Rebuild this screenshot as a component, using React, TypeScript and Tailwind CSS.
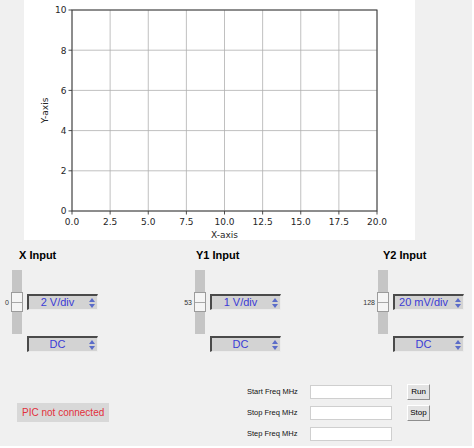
import React from 'react';

const AX = { x0: 48, x1: 353, y0: 10, y1: 211 };

function Plot() {
  const xs = Array.from({ length: 9 }, (_, i) => i);
  const ys = Array.from({ length: 6 }, (_, i) => i);
  const xAt = (i: number) => AX.x0 + (i * (AX.x1 - AX.x0)) / 8;
  const yAt = (i: number) => AX.y1 - (i * (AX.y1 - AX.y0)) / 5;
  const font = { fontFamily: '"DejaVu Sans", sans-serif', fontSize: 9 };

  return (
    <svg width={391} height={240} className="bg-white block">
      {/* grid */}
      {xs.map((i) => (
        <line key={'gx' + i} x1={xAt(i)} x2={xAt(i)} y1={AX.y0} y2={AX.y1} stroke="#b0b0b0" strokeWidth={0.8} />
      ))}
      {ys.map((i) => (
        <line key={'gy' + i} x1={AX.x0} x2={AX.x1} y1={yAt(i)} y2={yAt(i)} stroke="#b0b0b0" strokeWidth={0.8} />
      ))}
      {/* spines */}
      <rect x={AX.x0} y={AX.y0} width={AX.x1 - AX.x0} height={AX.y1 - AX.y0} fill="none" stroke="#3a3a3a" strokeWidth={1} />
      {/* ticks + labels */}
      {xs.map((i) => (
        <g key={'tx' + i}>
          <line x1={xAt(i)} x2={xAt(i)} y1={AX.y1} y2={AX.y1 + 3.5} stroke="#3a3a3a" strokeWidth={0.9} />
          <text x={xAt(i)} y={224.5} textAnchor="middle" fill="#262626" style={font}>
            {(i * 2.5).toFixed(1)}
          </text>
        </g>
      ))}
      {ys.map((i) => (
        <g key={'ty' + i}>
          <line x1={AX.x0 - 3.5} x2={AX.x0} y1={yAt(i)} y2={yAt(i)} stroke="#3a3a3a" strokeWidth={0.9} />
          <text x={42.5} y={yAt(i) + 3.3} textAnchor="end" fill="#262626" style={font}>
            {i * 2}
          </text>
        </g>
      ))}
      <text x={(AX.x0 + AX.x1) / 2} y={237.5} textAnchor="middle" fill="#262626" style={font}>
        X-axis
      </text>
      <text
        x={0}
        y={0}
        textAnchor="middle"
        fill="#262626"
        style={font}
        transform={`translate(24 ${(AX.y0 + AX.y1) / 2}) rotate(-90)`}
      >
        Y-axis
      </text>
    </svg>
  );
}

function SpinArrows() {
  return (
    <svg width={6} height={10} viewBox="0 0 6 10">
      <polygon points="3,0 6,4 0,4" fill="#5b6cc8" />
      <polygon points="0,6 6,6 3,10" fill="#5b6cc8" />
    </svg>
  );
}

function Spinbox({ value }: { value: string }) {
  return (
    <div className="flex items-center w-[71px] h-[16px] bg-[#d3d3d3] border-t-2 border-l-2 border-[#4a4a4a] border-b border-r border-b-[#ececec] border-r-[#ececec]">
      <span className="flex-1 text-center text-[11px] leading-none text-[#3b3bd6]">
        {value}
      </span>
      <span className="w-[11px] flex justify-center">
        <SpinArrows />
      </span>
    </div>
  );
}

function Channel({ title, titleClass, level, scale }: { title: string; titleClass: string; level: string; scale: string }) {
  return (
    <div className="flex flex-col w-[98px] shrink-0">
      <div className={`pt-[9px] h-[22px] text-[11px] leading-[13px] font-bold text-black whitespace-nowrap ${titleClass}`}>
        {title}
      </div>
      <div className="flex mt-[8px]">
        <div className="w-[10px] h-[64px] flex items-center justify-end pr-[1px] text-[7px] leading-none text-[#333] whitespace-nowrap">
          {level}
        </div>
        <div className="ml-[2px] w-[10px] h-[64px] bg-[#c5c5c5] relative">
          <div className="absolute left-[-1px] top-[22px] w-[12px] h-[20px] bg-[#f5f5f5] border border-[#9c9c9c] flex flex-col">
            <div className="flex-1 border-b border-[#a8a8a8]" />
            <div className="flex-1" />
          </div>
        </div>
        <div className="ml-[5px] pt-[24px] flex flex-col">
          <Spinbox value={scale} />
          <div className="mt-[26px]">
            <Spinbox value="DC" />
          </div>
        </div>
      </div>
    </div>
  );
}

function Entry() {
  return <div className="w-[82px] h-[14px] bg-white border border-[#cfcfcf]" />;
}

function Btn({ label }: { label: string }) {
  return (
    <button className="w-[23px] h-[16px] bg-[#e3e3e3] border border-t-white border-l-white border-r-[#8e8e8e] border-b-[#8e8e8e] text-[8px] leading-none text-black self-center">
      {label}
    </button>
  );
}

export default function App() {
  return (
    <div className="w-[474px] h-[448px] bg-white">
      <div className="w-[472px] h-[446px] bg-[#f0f0f0] flex flex-col font-['Liberation_Sans',Arial,sans-serif]">
        <div className="h-[240px] pl-[24px] flex">
          <Plot />
        </div>

        <div className="h-[130px] flex gap-[85px]">
          <Channel title="X Input" titleClass="ml-[19px]" level="0" scale="2 V/div" />
          <Channel title="Y1 Input" titleClass="ml-[13px]" level="53" scale="1 V/div" />
          <Channel title="Y2 Input" titleClass="ml-[17px]" level="128" scale="20 mV/div" />
        </div>

        <div className="h-[76px] flex">
          <div className="w-[247px] shrink-0">
            <div className="ml-[17px] mt-[33px] inline-flex items-center h-[19px] px-[5px] bg-[#d8d8d8] text-[10px] leading-none text-[#e2303c]">
              PIC not connected
            </div>
          </div>
          <div className="mt-[15px] grid grid-cols-[63px_82px_auto] grid-rows-[14px_14px_14px] gap-y-[7px] items-center">
            <span className="text-[7.5px] leading-none text-[#111] whitespace-nowrap">Start Freq MHz</span>
            <Entry />
            <div className="ml-[15px] flex">
              <Btn label="Run" />
            </div>
            <span className="text-[7.5px] leading-none text-[#111] whitespace-nowrap">Stop Freq MHz</span>
            <Entry />
            <div className="ml-[15px] flex">
              <Btn label="Stop" />
            </div>
            <span className="text-[7.5px] leading-none text-[#111] whitespace-nowrap">Step Freq MHz</span>
            <Entry />
            <div />
          </div>
        </div>
      </div>
    </div>
  );
}
